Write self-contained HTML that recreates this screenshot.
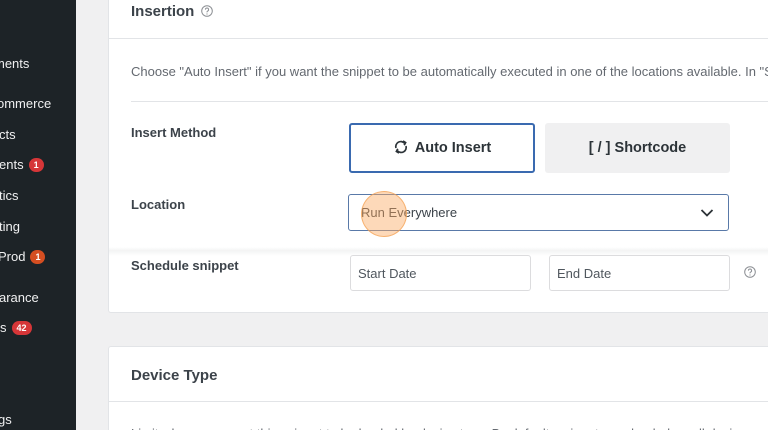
<!DOCTYPE html>
<html style="overflow:hidden;width:768px;height:430px"><head><meta charset="utf-8"><style>
*{margin:0;padding:0;box-sizing:border-box}
body{width:768px;height:430px;overflow:hidden;background:#f0f0f1;font-family:"Liberation Sans",sans-serif;position:relative;color:#2c3338}
.sb{position:absolute;left:0;top:0;width:76px;height:430px;background:#1d2327;color:#f0f0f1;font-size:13px}
.sb div{position:absolute;left:0;white-space:nowrap}
.badge{display:inline-block;background:#d63638;color:#fff;border-radius:9px;font-size:9px;font-weight:bold;padding:2px 5px;margin-left:5px;vertical-align:1px}
.card{position:absolute;left:108px;width:660px;background:#fff;border:1px solid #e2e4e7;border-right:none;border-radius:3px 0 0 3px;overflow:hidden}
.abs{position:absolute;white-space:nowrap}
.lbl{font-size:13px;font-weight:bold;color:#3c434a}
.inp{position:absolute;border:1px solid #dcdcde;border-radius:3px;height:36px;font-size:13px;color:#50575e;padding:10px 7px}
</style></head><body>
<div class="sb">
<div style="top:56px;left:-6px">ments</div>
<div style="top:96px;left:-3px">ommerce</div>
<div style="top:127px;left:-1px">cts</div>
<div style="top:157px;left:-1px">ents<span class="badge">1</span></div>
<div style="top:188px;left:-1px">tics</div>
<div style="top:219px;left:-1px">ting</div>
<div style="top:249px;left:-2px">Prod<span class="badge" style="background:#d54e21">1</span></div>
<div style="top:290px;left:-1px">arance</div>
<div style="top:320px;left:0">s<span class="badge">42</span></div>
<div style="top:412px;left:-2px">gs</div>
</div>
<div class="card" style="top:0;height:313px;border-top:none;border-radius:0 0 0 3px">
<div class="abs" style="left:22px;top:3px;font-size:15px;font-weight:bold;color:#3c434a">Insertion <svg width="12" height="12" viewBox="0 0 12 12" style="vertical-align:-1px;margin-left:2px"><circle cx="6" cy="6" r="5.3" fill="none" stroke="#8c8f94" stroke-width="1"/><path d="M4.4 4.6a1.6 1.6 0 1 1 2.2 1.5c-.5.2-.6.5-.6 1v.3" fill="none" stroke="#8c8f94" stroke-width="1"/><circle cx="6" cy="9" r=".6" fill="#8c8f94"/></svg></div>
<div class="abs" style="left:0;right:0;top:38px;border-top:1px solid #e2e4e7"></div>
<div class="abs" style="left:22px;top:64px;font-size:13px;color:#646970">Choose "Auto Insert" if you want the snippet to be automatically executed in one of the locations available. In "Shortcode" mode</div>
<div class="abs" style="left:22px;right:0;top:101px;border-top:1px solid #e2e4e7"></div>
<div class="abs lbl" style="left:22px;top:125px">Insert Method</div>
<div class="abs lbl" style="left:22px;top:197px">Location</div>
<div class="abs" style="left:240px;top:123px;width:186px;height:50px;border:2px solid #3a6ab0;border-radius:3px;font-size:14.5px;font-weight:bold;color:#2c3338;text-align:center;line-height:46px"><svg width="16" height="16" viewBox="0 0 16 16" style="vertical-align:-3px;margin-right:6px"><path d="M3 9A5 5 0 0 1 11.5 4.2" fill="none" stroke="#2c3338" stroke-width="1.7"/><path d="M10 2l2.6 1.6-1.4 2.6" fill="none" stroke="#2c3338" stroke-width="1.7"/><path d="M13 7A5 5 0 0 1 4.5 11.8" fill="none" stroke="#2c3338" stroke-width="1.7"/><path d="M6 14l-2.6-1.6 1.4-2.6" fill="none" stroke="#2c3338" stroke-width="1.7"/></svg>Auto Insert</div>
<div class="abs" style="left:436px;top:123px;width:185px;height:50px;background:#f0f0f1;border-radius:3px;font-size:14.5px;font-weight:bold;color:#2c3338;text-align:center;line-height:50px">[ / ] Shortcode</div>
<div class="abs" style="left:239px;top:194px;width:381px;height:37px;border:1px solid #5979a8;border-radius:3px;font-size:13px;color:#3c434a;padding:10px 12px">Run Everywhere<svg width="14" height="10" viewBox="0 0 14 10" style="position:absolute;right:14px;top:13px"><path d="M1.5 2l5.5 5.5L12.5 2" fill="none" stroke="#2c3338" stroke-width="1.8"/></svg></div>
<div class="abs" style="left:0;right:0;top:247px;height:9px;background:linear-gradient(#fff,#f3f4f4 40%,#fff)"></div>
<div class="abs lbl" style="left:22px;top:258px">Schedule snippet</div>
<div class="inp" style="left:241px;top:255px;width:181px">Start Date</div>
<div class="inp" style="left:440px;top:255px;width:181px">End Date</div>
<svg class="abs" width="12" height="12" viewBox="0 0 12 12" style="left:635px;top:266px"><circle cx="6" cy="6" r="5.3" fill="none" stroke="#8c8f94" stroke-width="1"/><path d="M4.4 4.6a1.6 1.6 0 1 1 2.2 1.5c-.5.2-.6.5-.6 1v.3" fill="none" stroke="#8c8f94" stroke-width="1"/><circle cx="6" cy="9" r=".6" fill="#8c8f94"/></svg>
</div>
<div style="position:absolute;left:361px;top:191px;width:46px;height:46px;border-radius:50%;background:rgba(250,170,100,0.45);border:1.5px solid rgba(245,160,80,0.7)"></div>
<div class="card" style="top:346px;height:84px;border-bottom:none;border-radius:3px 0 0 0">
<div class="abs" style="left:22px;top:20px;font-size:15px;font-weight:bold;color:#3c434a">Device Type</div>
<div class="abs" style="left:0;right:0;top:54px;border-top:1px solid #e2e4e7"></div>
<div class="abs" style="left:22px;top:79px;font-size:13px;color:#646970">Limit where you want this snippet to be loaded by device type. By default, snippets are loaded on all devices.</div>
</div>
</body></html>
